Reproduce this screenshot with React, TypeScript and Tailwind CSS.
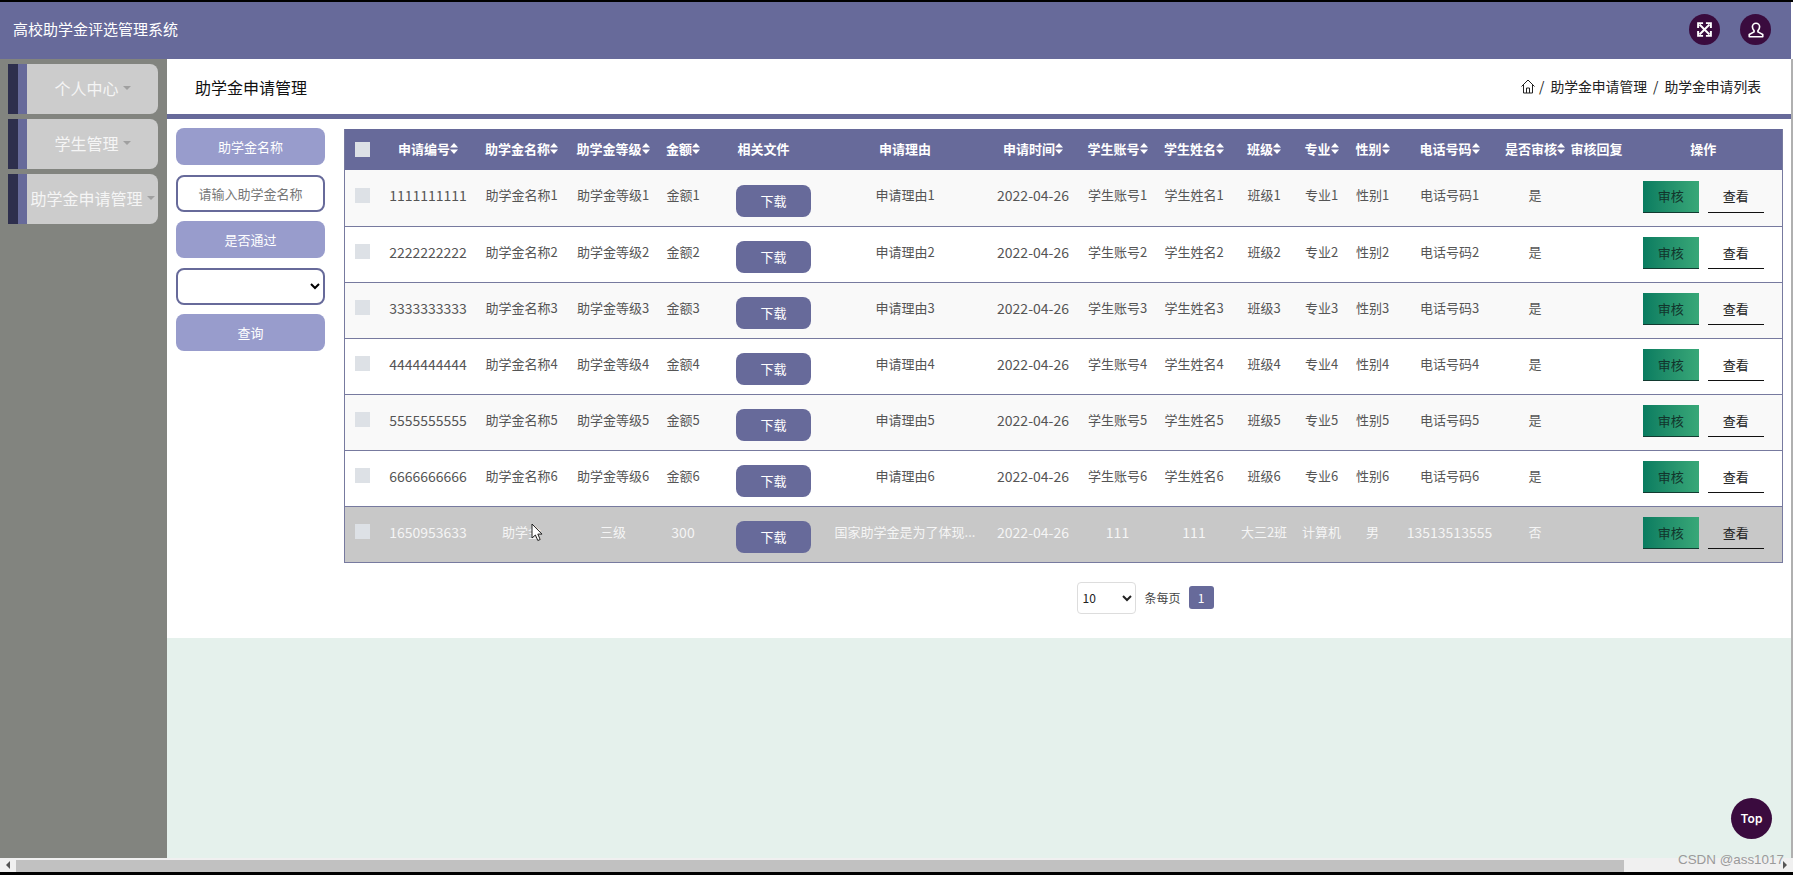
const rows = [1, 2, 3, 4, 5, 6].map((i) => ({
  code: String(i).repeat(10),
  name: `助学金名称${i}`,
  level: `助学金等级${i}`,
  amount: `金额${i}`,
  reason: `申请理由${i}`,
  date: '2022-04-26',
  account: `学生账号${i}`,
  student: `学生姓名${i}`,
  className: `班级${i}`,
  major: `专业${i}`,
  gender: `性别${i}`,
  phone: `电话号码${i}`,
  passed: '是',
}));

rows.push({
  code: '1650953633',
  name: '助学金',
  level: '三级',
  amount: '300',
  reason: '国家助学金是为了体现...',
  date: '2022-04-26',
  account: '111',
  student: '111',
  className: '大三2班',
  major: '计算机',
  gender: '男',
  phone: '13513513555',
  passed: '否',
});

const widths = ['w-[37px]', 'w-[93px]', 'w-[94px]', 'w-[89px]', 'w-[51px]', 'w-[130px]', 'w-[133px]', 'w-[108px]', 'w-[76px]', 'w-[77px]', 'w-[63px]', 'w-[52px]', 'w-[50px]', 'w-[104px]', 'w-[67px]', 'w-[56px]', 'w-[158px]'];

const SortIcon = () => (
  <svg width="8" height="11" viewBox="0 0 8 11" className="shrink-0" fill="currentColor">
    <path d="M4 0l4 4.5H0z" />
    <path d="M4 11L0 6.5h8z" />
  </svg>
);

const HeadCell = ({ label, sort = true, className = '' }: { label: string; sort?: boolean; className?: string }) => (
  <th className="p-0 font-bold">
    <div className={`flex justify-center items-center whitespace-nowrap pb-[2px] ${className}`}>
      {label}
      {sort && <SortIcon />}
    </div>
  </th>
);

const Cell = ({ children, className = '' }: { children: React.ReactNode; className?: string }) => (
  <td className="p-0 pt-[15px] align-top">
    <div className={`flex justify-center whitespace-nowrap leading-5 ${className}`}>{children}</div>
  </td>
);

const SideItem = ({ label }: { label: string }) => (
  <div className="flex h-[50px] w-[150px]">
    <div className="w-[10px] bg-[#2e2f4d]" />
    <div className="w-[9px] bg-[#676a9a]" />
    <div className="flex-1 flex items-center justify-center gap-[4px] pb-[2px] bg-[#cccccc] rounded-r-lg text-base text-[#f5f5f5] whitespace-nowrap">
      {label}
      <span className="w-0 h-0 border-x-[4.5px] border-t-[4.5px] border-x-transparent border-t-[#a0a0a0]" />
    </div>
  </div>
);

const FilterLabel = ({ label }: { label: string }) => (
  <div className="flex items-center justify-center h-[37px] rounded-lg bg-[#989ccc] text-white text-[13px]">{label}</div>
);

const App = () => {
  return (
    <div className="relative w-[1793px] h-[875px] overflow-hidden flex flex-col bg-white font-['Noto_Sans_CJK_SC','Microsoft_YaHei',sans-serif]">
      <div className="h-[2px] bg-black shrink-0" />
      <header className="h-[57px] shrink-0 bg-[#676a9a] flex items-center justify-between pl-[13px] pr-[20px] mr-[2px]">
        <div className="text-[15px] text-white pb-[3px]">高校助学金评选管理系统</div>
        <div className="flex items-center gap-[20px] pb-[2px]">
          <div className="w-[31px] h-[31px] rounded-full bg-[#3a0b3e] flex items-center justify-center text-white">
            <svg width="17" height="17" viewBox="0 0 24 24" fill="none" stroke="currentColor" strokeWidth="2.8">
              <path d="M5 5l14 14M19 5L5 19" />
              <path d="M3 10V3h7M14 3h7v7M3 14v7h7M21 14v7h-7" />
            </svg>
          </div>
          <div className="w-[31px] h-[31px] rounded-full bg-[#3a0b3e] flex items-center justify-center text-white">
            <svg width="18" height="18" viewBox="0 0 24 24" fill="none" stroke="currentColor" strokeWidth="2.2" strokeLinejoin="round">
              <path d="M12 3a4.8 4.8 0 0 0-4.8 4.8c0 2.2 1 3.8 2.2 4.9v1.8L3 18v3h18v-3l-6.4-3.5v-1.8c1.2-1.1 2.2-2.7 2.2-4.9A4.8 4.8 0 0 0 12 3z" />
            </svg>
          </div>
        </div>
      </header>

      <div className="flex flex-1 min-h-0">
        <aside className="w-[167px] shrink-0 bg-[#82847f] pt-[5px] pl-[8px] flex flex-col gap-[5px]">
          <SideItem label="个人中心" />
          <SideItem label="学生管理" />
          <SideItem label="助学金申请管理" />
        </aside>

        <main className="flex-1 min-w-0 flex flex-col bg-[#e5f1ec]">
          <div className="bg-white">
            <div className="h-[55px] flex items-center justify-between pl-[28px] pr-[30px] border-b-[5px] border-[#676a9a] box-content">
              <div className="text-base text-[#111111]">助学金申请管理</div>
              <div className="flex items-center gap-[6px] text-[13.8px] text-[#222222]">
                <svg width="14" height="15" viewBox="0 0 14 15" fill="none" stroke="currentColor" strokeWidth="1" className="mr-[-2px]">
                  <path d="M0.5 7.5L7 1l6.5 6.5" />
                  <path d="M2.5 6v8h9V6" />
                  <path d="M5.5 14V9h3v5" />
                </svg>
                <span>/</span>
                <span>助学金申请管理</span>
                <span>/</span>
                <span>助学金申请列表</span>
              </div>
            </div>

            <div className="flex gap-[19px] pl-[9px] pt-[9px] h-[519px]">
              <div className="w-[149px] shrink-0 flex flex-col gap-[9.5px]">
                <FilterLabel label="助学金名称" />
                <input
                  placeholder="请输入助学金名称"
                  className="h-[37px] w-full rounded-lg border-2 border-[#676a9a] bg-white text-center text-[13px] outline-none placeholder:text-[#777777]"
                />
                <FilterLabel label="是否通过" />
                <select className="h-[37px] w-full rounded-lg border-2 border-[#676a9a] bg-white text-[13px]" />
                <FilterLabel label="查询" />
              </div>

              <div className="w-[1438px] shrink-0 pt-[1px]">
                <table className="table-fixed border-collapse w-[1438px] text-[13px] text-[#555555] border-x border-b border-[#777a9f]">
                  <colgroup>
                    {widths.map((w, i) => (
                      <col key={i} className={w} />
                    ))}
                  </colgroup>
                  <thead>
                    <tr className="h-[41px] bg-[#676a9a] text-white">
                      <th className="p-0">
                        <div className="flex justify-center pr-[2px] pb-[1px]">
                          <span className="w-[15px] h-[15px] bg-[#dde1e6]" />
                        </div>
                      </th>
                      <HeadCell label="申请编号" />
                      <HeadCell label="助学金名称" />
                      <HeadCell label="助学金等级" />
                      <HeadCell label="金额" />
                      <HeadCell label="相关文件" sort={false} className="pr-[20px]" />
                      <HeadCell label="申请理由" sort={false} />
                      <HeadCell label="申请时间" className="pl-[15px]" />
                      <HeadCell label="学生账号" />
                      <HeadCell label="学生姓名" />
                      <HeadCell label="班级" />
                      <HeadCell label="专业" />
                      <HeadCell label="性别" />
                      <HeadCell label="电话号码" />
                      <HeadCell label="是否审核" />
                      <HeadCell label="审核回复" sort={false} />
                      <HeadCell label="操作" sort={false} />
                    </tr>
                  </thead>
                  <tbody>
                    {rows.map((row, i) => (
                      <tr
                        key={row.code}
                        className={`h-[56px] border-t border-[#777a9f] first:border-t-0 ${
                          i === 6 ? 'bg-[#c8c8c8] text-[#f5f5f5]' : i % 2 === 0 ? 'bg-[#f9f9f9]' : 'bg-white'
                        }`}
                      >
                        <td className="p-0 pt-[17.5px] align-top">
                          <div className="flex justify-center pr-[2px]">
                            <span className="w-[15px] h-[15px] bg-[#dde1e6]" />
                          </div>
                        </td>
                        <Cell className="text-sm">{row.code}</Cell>
                        <Cell>{row.name}</Cell>
                        <Cell>{row.level}</Cell>
                        <Cell className={i === 6 ? 'text-sm' : ''}>{row.amount}</Cell>
                        <td className="p-0 pt-[14.5px] align-top">
                          <div className="flex justify-center">
                            <button className="w-[75px] h-[32px] rounded-lg bg-[#676a9a] text-white text-[13px]">下载</button>
                          </div>
                        </td>
                        <Cell>{row.reason}</Cell>
                        <Cell className="text-sm pl-[15px]">{row.date}</Cell>
                        <Cell className={i === 6 ? 'text-sm' : ''}>{row.account}</Cell>
                        <Cell className={i === 6 ? 'text-sm' : ''}>{row.student}</Cell>
                        <Cell>{row.className}</Cell>
                        <Cell>{row.major}</Cell>
                        <Cell>{row.gender}</Cell>
                        <Cell className={i === 6 ? 'text-sm' : ''}>{row.phone}</Cell>
                        <Cell>{row.passed}</Cell>
                        <Cell>{''}</Cell>
                        <td className="p-0 pt-[10.5px] align-top">
                          <div className="flex justify-center gap-[9px]">
                            <button className="w-[56px] h-[32px] bg-gradient-to-r from-[#087c60] to-[#38a878] border-b border-[#123a30] text-[#12352c] text-[13px]">审核</button>
                            <button className="w-[56px] h-[32px] border-b border-[#111111] text-[#222222] text-[13px]">查看</button>
                          </div>
                        </td>
                      </tr>
                    ))}
                  </tbody>
                </table>

                <div className="flex items-center justify-center gap-[8px] mt-[19px] pl-[165px] text-xs text-[#444444]">
                  <select className="w-[59px] h-[32px] rounded border border-[#dddddd] bg-white text-xs text-[#222222]" defaultValue="10">
                    <option value="10">10</option>
                  </select>
                  <span>条每页</span>
                  <span className="w-[25px] h-[23px] rounded-[3px] bg-[#676a9a] text-white flex items-center justify-center">1</span>
                </div>
              </div>
            </div>
          </div>
        </main>
        <div className="w-[2px] shrink-0 bg-[#b0b0b0]" />
      </div>

      <div className="h-[14px] shrink-0 bg-[#f0f0f0] flex items-center">
        <div className="w-[16px] flex justify-center">
          <span className="w-0 h-0 border-y-[4px] border-r-[4px] border-y-transparent border-r-[#555555]" />
        </div>
        <div className="w-[1608px] h-[12px] self-end bg-[#c1c1c1]" />
        <div className="flex-1 flex justify-end pr-[6px]">
          <span className="w-0 h-0 border-y-[4px] border-l-[4px] border-y-transparent border-l-[#555555]" />
        </div>
      </div>
      <div className="h-[3px] shrink-0 bg-black" />

      <div className="absolute left-[1731px] top-[798px] w-[41px] h-[41px] rounded-full bg-[#3a0b3e] flex items-center justify-center text-white text-xs font-semibold font-['Inter',sans-serif]">
        Top
      </div>
      <div className="absolute left-[1678px] top-[852px] text-[13.4px] leading-4 text-[#9a9a9a] font-['Liberation_Sans',sans-serif]">CSDN @ass1017</div>
      <svg className="absolute left-[531px] top-[523px]" width="13" height="19" viewBox="0 0 13 19">
        <path d="M1 1v14l3.4-3 2.4 5.5 2.4-1-2.4-5.4H11z" fill="#ffffff" stroke="#222222" strokeWidth="1" />
      </svg>
    </div>
  );
};

export default App;
